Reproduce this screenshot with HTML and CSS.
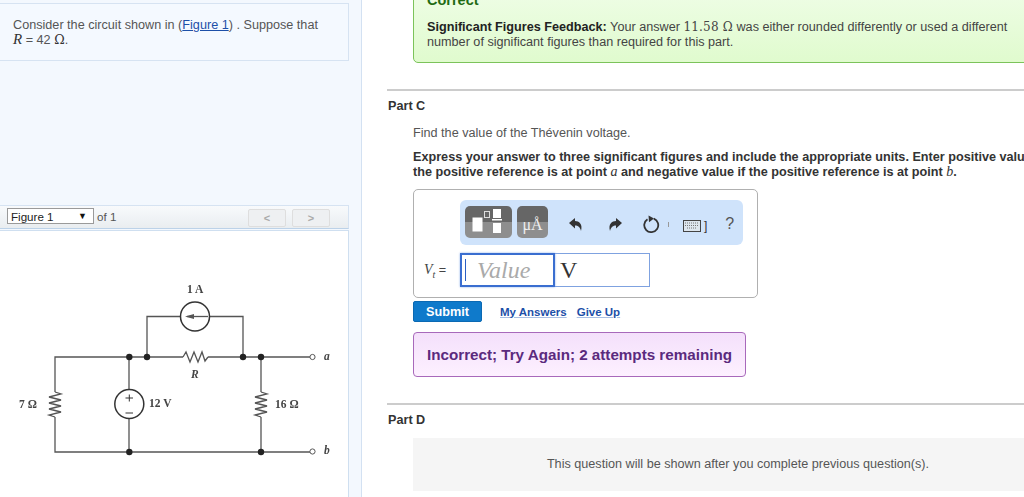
FILE: index.html
```html
<!DOCTYPE html>
<html lang="en">
<head>
<meta charset="utf-8">
<title>Circuit</title>
<link rel="stylesheet" href="styles.css">
</head>
<body>
<div class="page">
  <aside class="left">
    <div class="problem">
      Consider the circuit shown in (<a class="link" href="#">Figure 1</a>) . Suppose that<br>
      <span class="math mi">R</span> = 42 <span class="math">Ω</span>.
    </div>
    <div class="figbar">
      <div class="figselect"><span>Figure 1</span><span class="caret">▼</span></div>
      <span class="ofone">of 1</span>
      <div class="pager">
        <span class="pagebtn">&lt;</span>
        <span class="pagebtn">&gt;</span>
      </div>
    </div>
    <div class="figure">
      <svg class="circuit" width="347" height="266" viewBox="0 231 347 266">
        <g class="wire">
          <path d="M129 357H55V392M55 417V452H312"/>
          <path d="M129 357H183M208 357H312"/>
          <path d="M147 357V316.5H180.5M209.5 316.5H243V357"/>
          <path d="M129 357V389.5M129 418.5V452"/>
          <path d="M261 357V392M261 417V452"/>
          <path d="M55 392L61 394L49 397L61 400L49 403L61 406L49 409L61 412L49 415L55 417"/>
          <path d="M261 392L267 394L255 397L267 400L255 403L267 406L255 409L267 412L255 415L261 417"/>
          <path d="M183 357L186 352L190 362L194 352L198 362L202 352L205 361L208 357"/>
          <path d="M208 316.5H187"/>
        </g>
        <path class="head" d="M185 316.5L194 314V319Z"/>
        <circle class="ring" cx="195" cy="316.5" r="14.5"/>
        <circle class="ring" cx="129.3" cy="404" r="14.5"/>
        <path class="thin" d="M125.500 398H133M129.300 394.500V401.500M125.500 413H133"/>
        <g class="dot">
          <circle cx="129.300" cy="357" r="3.200"/><circle cx="147" cy="357" r="3.200"/>
          <circle cx="243" cy="357" r="3.200"/><circle cx="261" cy="357" r="3.200"/>
          <circle cx="129.300" cy="452" r="3.200"/><circle cx="261" cy="452" r="3.200"/>
        </g>
        <circle class="term" cx="312.500" cy="357" r="2.600"/>
        <circle class="term" cx="312.500" cy="451.500" r="2.600"/>
        <text class="cl" x="187" y="293">1 A</text>
        <text class="cl ci" x="191" y="378">R</text>
        <text class="cl" x="19" y="407.500">7 Ω</text>
        <text class="cl" x="149" y="407">12 V</text>
        <text class="cl" x="275" y="407.500">16 Ω</text>
        <text class="cl ci" x="324" y="360">a</text>
        <text class="cl ci" x="324" y="454">b</text>
      </svg>
    </div>
  </aside>

  <main class="right">
    <div class="content">
      <div class="correct">
        <div class="correct-title">Correct</div>
        <p class="feedback"><b>Significant Figures Feedback:</b> Your answer <span class="math big">11.58 Ω</span> was either rounded differently or used a different<br>number of significant figures than required for this part.</p>
      </div>

      <section class="part part-c">
        <h2 class="part-title">Part C</h2>
        <div class="part-body">
          <p class="question">Find the value of the Thévenin voltage.</p>
          <p class="instruction"><b>Express your answer to three significant figures and include the appropriate units. Enter positive value if<br>the positive reference is at point <span class="math mi reg">a</span> and negative value if the positive reference is at point <span class="math mi reg">b</span>.</b></p>

          <div class="answer">
            <div class="tools">
              <div class="tbtn tbtn-tpl">
                <svg width="47" height="32" viewBox="0 0 47 32">
                  <rect class="wf" x="7.500" y="11.500" width="10" height="14"/>
                  <rect class="wo" x="19.500" y="5.500" width="5" height="6"/>
                  <rect class="wf" x="28" y="3" width="8" height="9"/>
                  <rect class="wf" x="27" y="13" width="10" height="1.500"/>
                  <rect class="wf" x="28" y="17" width="8" height="10"/>
                </svg>
              </div>
              <div class="tbtn tbtn-unit">μÅ</div>
              <svg class="ico ico-undo" width="16" height="16" viewBox="0 0 16 16"><path d="M1 7L7 2V5C11 5 15 8 13 15C12 11 10 9.500 7 9.500V12.500Z"/></svg>
              <svg class="ico ico-redo" width="16" height="16" viewBox="0 0 16 16"><path d="M15 7L9 2V5C5 5 1 8 3 15C4 11 6 9.500 9 9.500V12.500Z"/></svg>
              <svg class="ico ico-reset" width="18" height="18" viewBox="0 0 18 18"><path class="stroke" d="M10.800 3.600A7 7 0 1 1 4.500 4.200"/><path d="M5.500 .5L11 3.600L6 7.200Z"/></svg>
              <span class="tick"></span>
              <svg class="ico ico-kbd" width="18" height="12" viewBox="0 0 18 12"><rect class="kbd" x=".5" y=".5" width="17" height="11"/><path class="keys" d="M2 3H16M2 5.500H16M4 8H14"/></svg>
              <span class="brk">]</span>
              <span class="help">?</span>
            </div>
            <div class="entry">
              <span class="vlabel"><span class="math mi">V<sub>t</sub></span> =</span>
              <div class="inp inp-value"><span class="cursor"></span><span class="ph">Value</span></div>
              <div class="inp inp-unit">V</div>
            </div>
          </div>

          <div class="actions">
            <button class="submit">Submit</button>
            <a class="alink first" href="#">My Answers</a>
            <a class="alink" href="#">Give Up</a>
          </div>

          <div class="incorrect">Incorrect; Try Again; 2 attempts remaining</div>
        </div>
      </section>

      <section class="part part-d">
        <h2 class="part-title">Part D</h2>
        <div class="part-body">
          <div class="locked">This question will be shown after you complete previous question(s).</div>
        </div>
      </section>
    </div>
  </main>
</div>
</body>
</html>
```
FILE: styles.css
```css
* { box-sizing: border-box; }
html, body { margin: 0; padding: 0; height: 497px; overflow: hidden; background: #fff; }
body { font-family: "Liberation Sans", Arial, sans-serif; font-size: 12px; color: #444; }
p { margin: 0; }
.page { display: flex; width: 1024px; height: 497px; overflow: hidden; }
.math { font-family: "DejaVu Serif", "Liberation Serif", serif; line-height: 0; }
.mi { font-family: "Liberation Serif", serif; font-style: italic; }
.reg { font-weight: normal; font-size: 14px; }
.big { font-size: 12px; letter-spacing: .2px; }

.left { flex: 0 0 362px; height: 497px; background: #f3f8fe; border-right: 1px solid #d3e1f2; padding-top: 3px; }
.problem { width: 349px; height: 58px; padding: 14px 13px 0; background: #f4f9ff; border: 1px solid #d6e3f2; border-left: 0; font-size: 12.650px; line-height: 15px; color: #555; }
.problem .mi { font-size: 15px; color: #333; }
.problem .math { color: #333; }
.link { color: #1c4fa8; text-decoration: underline; }

.figbar { display: flex; align-items: center; width: 349px; height: 24px; margin-top: 144px; padding-left: 7px; background: linear-gradient(#f8fafc, #e9edf0); border: 1px solid #d6e3f2; border-left: 0; border-bottom-color: #bcd2e8; }
.figselect { display: flex; justify-content: space-between; align-items: center; width: 87px; height: 16px; margin-bottom: 2px; padding: 0 6px 0 3px; background: #fff; border: 1px solid #9a9a9a; color: #222; font-size: 11.600px; }
.caret { font-size: 9px; color: #111; }
.ofone { margin-left: 3px; margin-bottom: 2px; font-size: 11.600px; color: #555; }
.pager { display: flex; gap: 6px; margin-left: auto; margin-right: 18px; padding-top: 2px; }
.pagebtn { width: 38px; height: 18px; border: 1px solid #dedede; border-radius: 2px; background: #eef0f2; color: #aaa; text-align: center; font-size: 11px; font-weight: bold; line-height: 16px; }

.figure { width: 349px; height: 268px; margin-top: 1px; background: #fff; border: 1px solid #cfdff0; border-left: 0; }
.circuit { display: block; filter: blur(.3px); }
.wire { fill: none; stroke: #555; stroke-width: 1.300; }
.thin { fill: none; stroke: #333; stroke-width: 1; }
.head { fill: #555; }
.ring { fill: none; stroke: #333; stroke-width: 1.500; }
.dot { fill: #222; }
.term { fill: #fff; stroke: #555; stroke-width: 1; }
.cl { font-family: "Liberation Serif", serif; font-size: 11.500px; font-weight: bold; fill: #444; }
.ci { font-style: italic; }

.right { flex: 1 1 auto; min-width: 0; overflow: hidden; height: 497px; }
.content { width: 701px; padding-left: 51px; margin-top: -9px; }

.correct { width: 650px; height: 72px; padding: 0 13px; border: 1px solid #7cc35a; border-radius: 0 0 5px 5px; background: linear-gradient(#eefde5, #e0fbce); }
.correct-title { height: 18px; padding-top: 2px; font-size: 14.500px; font-weight: bold; line-height: 12px; color: #1f6b12; }
.feedback { margin-top: 10px; font-size: 12.650px; line-height: 15px; color: #444; white-space: nowrap; }
.feedback b { color: #222; }

.part { margin-left: -26px; border-top: 2px solid #ccc; }
.part-c { margin-top: 26px; }
.part-d { margin-top: 26px; }
.part-title { margin: 0; font-size: 12.650px; font-weight: bold; color: #333; line-height: 15px; padding-top: 8px; padding-left: 1px; }
.part-body { margin-left: 26px; }

.question { margin-top: 12px; font-size: 12.650px; line-height: 15px; color: #555; }
.instruction { margin-top: 9px; font-size: 12.650px; line-height: 15px; color: #333; white-space: nowrap; }

.answer { width: 345px; height: 109px; margin-top: 9px; padding: 10px 0 0 46px; border: 1px solid #b0b0b0; border-radius: 5px; }
.tools { display: flex; align-items: center; width: 283px; height: 45px; padding-left: 5px; background: #cfe3fb; border-radius: 6px; }
.tbtn { height: 32px; margin-top: -1px; border-radius: 5px; background: linear-gradient(#666 0, #666 50%, #8e8e8e 50%, #8e8e8e 100%); }
.tbtn-tpl { width: 47px; }
.tbtn-tpl svg { display: block; }
.wf { fill: #fff; }
.wo { fill: none; stroke: #ddd; stroke-width: 1; }
.tbtn-unit { width: 31px; margin-left: 5px; font-family: "Liberation Serif", serif; font-size: 16px; line-height: 38px; text-align: center; color: #eee; }
.ico { flex: none; fill: #333; margin-top: 3px; }
.ico-undo { margin-left: 20px; }
.ico-redo { margin-left: 23px; }
.ico-reset { margin-left: 20px; margin-top: 2px; }
.stroke { fill: none; stroke: #333; stroke-width: 1.800; }
.tick { width: 1px; height: 5px; margin-left: 7px; margin-top: 3px; background: #999; }
.ico-kbd { margin-left: 14px; margin-top: 7px; }
.kbd { fill: #dde6ee; stroke: #444; stroke-width: 1; }
.keys { fill: none; stroke: #777; stroke-width: 1; stroke-dasharray: 1 1; }
.brk { margin-left: 3px; margin-top: 6px; font-size: 12px; color: #333; }
.help { margin-left: 18px; margin-top: 3px; font-size: 16px; color: #555; }

.entry { display: flex; align-items: center; height: 34px; margin: 8px 0 0 -36px; }
.vlabel { width: 36px; font-size: 12.650px; color: #444; white-space: nowrap; }
.vlabel .mi { font-size: 14px; }
.vlabel sub { font-size: 10px; line-height: 0; }
.inp { display: flex; align-items: center; width: 95px; height: 34px; font-family: "Liberation Serif", serif; font-size: 24px; }
.inp-value { border: 2px solid #3a6ed0; box-shadow: 0 0 2px #8fb0ea; color: #aaa; font-style: italic; padding-left: 3px; }
.cursor { width: 1px; height: 22px; background: #2b5fc4; margin-right: 11px; }
.inp-unit { border: 1px solid #7fa2e0; border-left: 0; padding-left: 5px; color: #333; }

.actions { display: flex; align-items: center; height: 21px; margin-top: 3px; }
.submit { width: 69px; height: 21px; padding: 0; border: 1px solid #0b69b3; border-radius: 2px; background: #0f7acb; color: #fff; font: bold 12.650px "Liberation Sans", Arial, sans-serif; }
.alink { margin-left: 10px; color: #1c4fa8; font-size: 11.500px; font-weight: bold; text-decoration: underline; text-decoration-color: #a9bfe3; }
.first { margin-left: 18px; }

.incorrect { width: 333px; height: 45px; margin-top: 10px; padding-left: 13px; border: 1px solid #a869bb; border-radius: 4px; background: linear-gradient(#f4e0fb, #fdf0ff); color: #5b2a7e; font-size: 15.200px; font-weight: bold; line-height: 43px; white-space: nowrap; }

.locked { width: 650px; height: 53px; margin-top: 10px; background: #f5f5f5; color: #555; font-size: 12.650px; line-height: 53px; text-align: center; }
```
